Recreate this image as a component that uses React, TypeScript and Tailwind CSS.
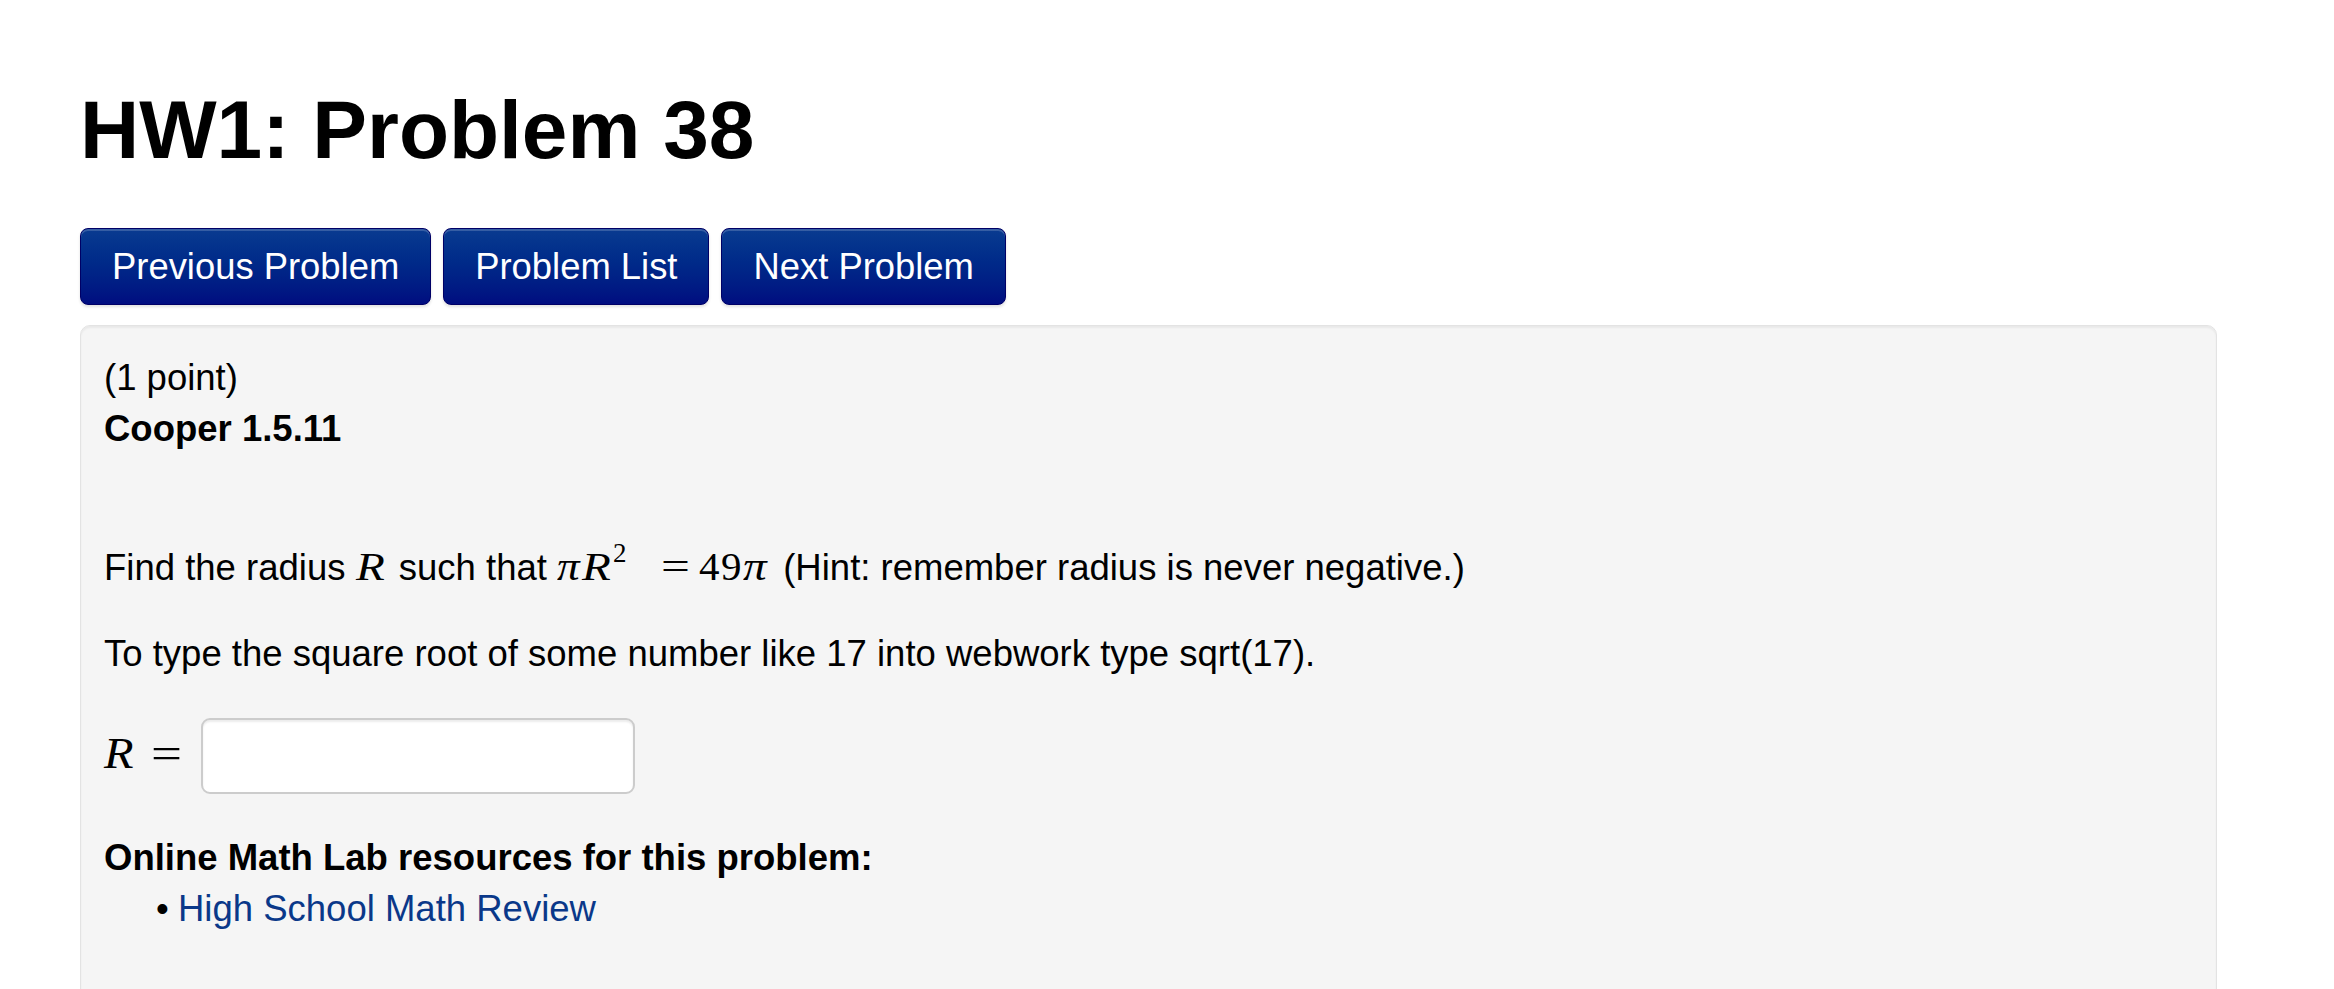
import React from "react"

const navButtons = ["Previous Problem", "Problem List", "Next Problem"] as const

function NavButton({ label }: { label: string }) {
  return (
    <button
      type="button"
      className="h-[77px] rounded-[8px] border border-[#000066] bg-gradient-to-b from-[#0a3b90] to-[#000c80] px-[31px] text-[36.4px] leading-[51px] text-white shadow-[inset_0_2px_0_rgba(255,255,255,0.18),0_2px_3px_rgba(0,0,0,0.12)]"
    >
      {label}
    </button>
  )
}

export default function App() {
  return (
    <div className="min-h-screen bg-white font-['Liberation_Sans',Arial,sans-serif] text-black">
      <div className="pl-[80px] pr-[117px] pt-[85px]">
        {/* Title */}
        <h1 className="text-[82px] font-bold leading-[90px]">HW1: Problem 38</h1>

        {/* Navigation */}
        <div className="mt-[53px] flex gap-[12px]">
          {navButtons.map((label) => (
            <NavButton key={label} label={label} />
          ))}
        </div>

        {/* Problem body */}
        <div className="mt-[20px] rounded-[10px] border border-[#e3e3e3] bg-[#f5f5f5] px-[23px] pt-[26px] pb-[90px] text-[36.5px] leading-[51px] shadow-[inset_0_2px_2px_rgba(0,0,0,0.05)]">
          <p>(1 point)</p>
          <p className="font-bold">Cooper 1.5.11</p>

          <p className="mt-[88px] h-[51px] whitespace-nowrap">
            Find the radius{" "}
            <span className="inline-block w-[33px] font-['Liberation_Serif',serif] text-[41px] leading-[40px] italic">
              <span className="inline-block origin-left scale-x-[1.15]">R</span>
            </span>{" "}
            such that{" "}
            <span className="font-['Liberation_Serif',serif] text-[41px] leading-[40px]">
              <span className="inline-block w-[25px] italic">
                <span className="inline-block origin-left scale-x-[1.1]">π</span>
              </span>
              <span className="inline-block w-[31px] italic">
                <span className="inline-block origin-left scale-x-[1.15]">R</span>
              </span>
              <span className="relative -top-[18px] inline-block w-[15px] text-[27px] leading-[27px]">2</span>
              <span className="inline-block w-[33px]" />
              <span className="inline-block w-[38px]">
                <span className="inline-block origin-left scale-x-[1.25]">=</span>
              </span>
              <span className="inline-block w-[22px]">4</span>
              <span className="inline-block w-[22px]">9</span>
              <span className="inline-block w-[30px] italic">
                <span className="inline-block origin-left scale-x-[1.15]">π</span>
              </span>
            </span>{" "}
            (Hint: remember radius is never negative.)
          </p>

          <p className="mt-[35px]">
            To type the square root of some number like 17 into webwork type sqrt(17).
          </p>

          <div className="mt-[39px] flex items-center">
            <span className="mb-[6px] w-[97px] font-['Liberation_Serif',serif] text-[44px] leading-[51px]">
              <span className="inline-block w-[47px] italic">
                <span className="inline-block origin-left scale-x-[1.1]">R</span>
              </span>
              <span className="inline-block origin-left scale-x-[1.25]">=</span>
            </span>
            <input
              type="text"
              aria-label="R"
              className="h-[76px] w-[434px] rounded-[9px] border-2 border-[#cccccc] bg-white px-[14px] text-[36px] shadow-[inset_0_2px_2px_rgba(0,0,0,0.08)] outline-none"
            />
          </div>

          <p className="mt-[38px] font-bold">Online Math Lab resources for this problem:</p>
          <ul className="pl-[52px]">
            <li className="flex">
              <span className="w-[22px]">•</span>
              <a href="#" className="text-[#0a3889]">
                High School Math Review
              </a>
            </li>
          </ul>
        </div>
      </div>
    </div>
  )
}
